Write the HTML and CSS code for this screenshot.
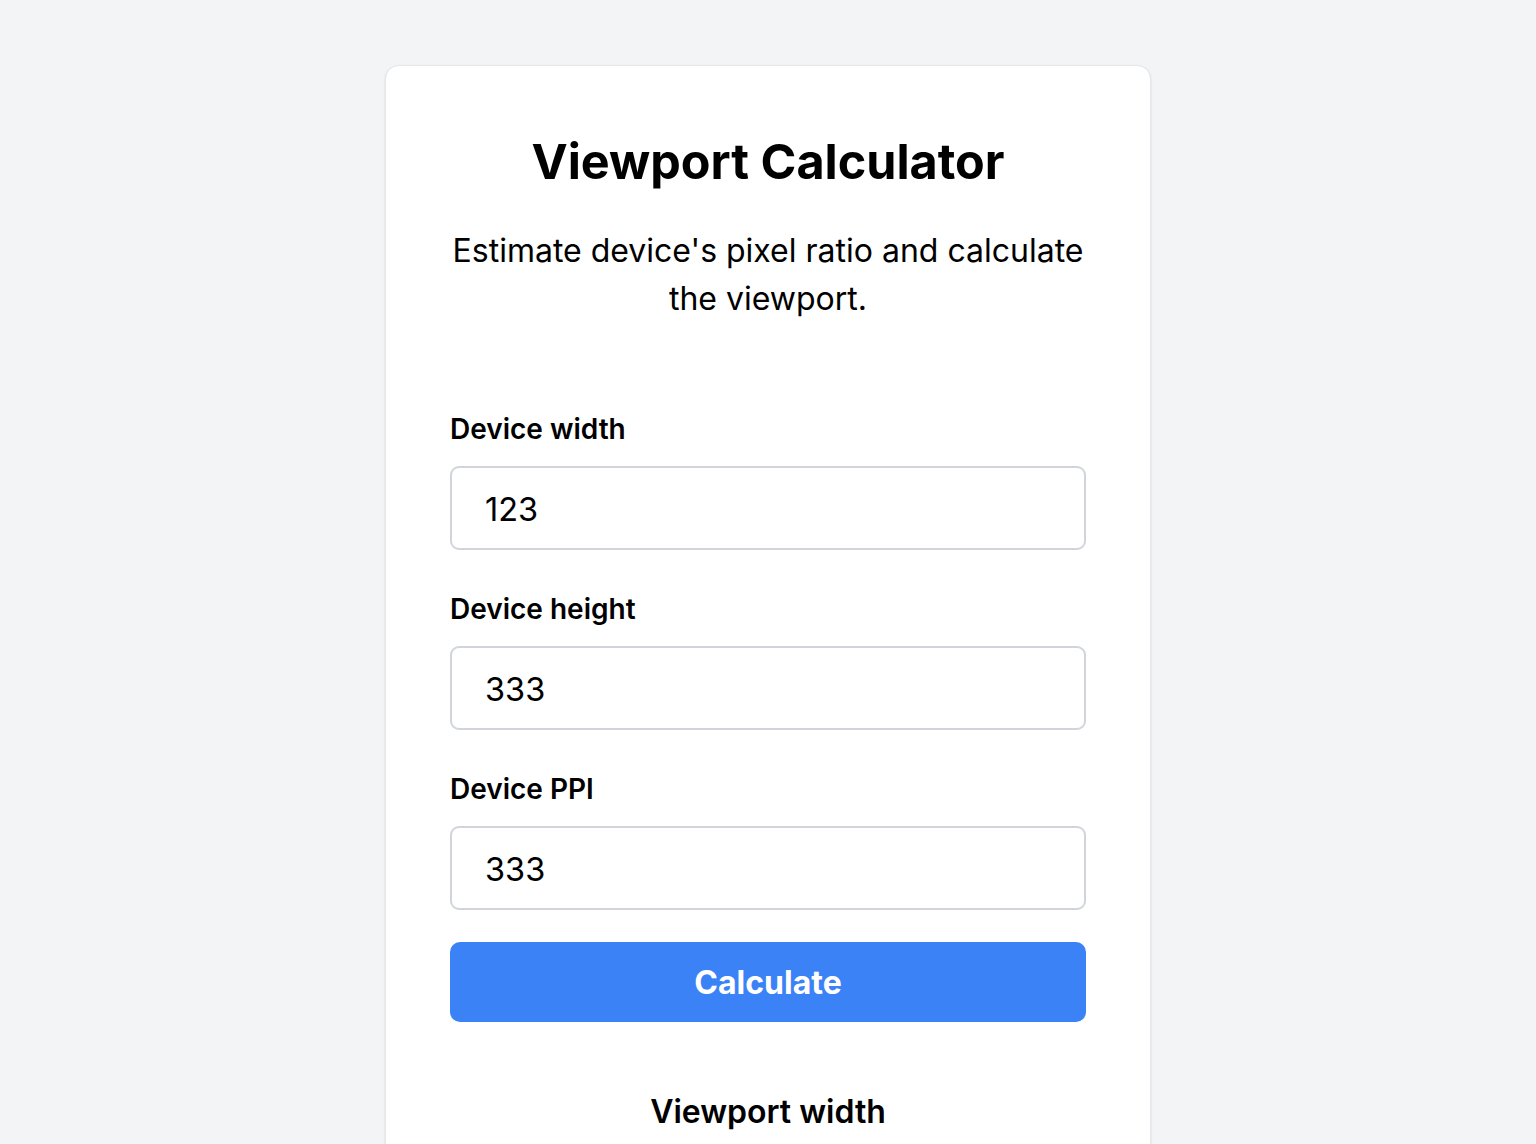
FILE: index.html
```html
<!DOCTYPE html>
<html lang="en">
<head>
    <meta charset="UTF-8">
    <meta name="viewport" content="width=device-width, initial-scale=1.0">
    <title>Viewport Calculator</title>
    <link rel="stylesheet" href="styles.css">
</head>
<body>
    <div class="calculator">
        <h1 class="calc-title">Viewport Calculator</h1>
        <p class="calc-subtitle">Estimate device's pixel ratio and calculate the viewport.</p>

        <form class="calc-form">
            <div class="field">
                <label class="field-label" for="width">Device width</label>
                <input class="field-input" id="width" type="text" value="123">
            </div>
            <div class="field">
                <label class="field-label" for="height">Device height</label>
                <input class="field-input" id="height" type="text" value="333">
            </div>
            <div class="field">
                <label class="field-label" for="ppi">Device PPI</label>
                <input class="field-input" id="ppi" type="text" value="333">
            </div>
            <button class="calc-button" type="button">Calculate</button>
        </form>

        <div class="results">
            <h2 class="result-title">Viewport width</h2>
        </div>
    </div>
</body>
</html>
```

FILE: styles.css
```css
* {
    margin: 0;
    padding: 0;
    box-sizing: border-box;
}

body {
    font-family: Inter, 'Noto Sans', sans-serif;
    background: #f3f4f6;
    color: #000;
    display: flex;
    justify-content: center;
    padding-top: 65px;
    min-height: 100vh;
}

.calculator {
    background: #fff;
    width: 766px;
    padding: 67px 64px 40px;
    border-radius: 14px;
    border: 1px solid #e5e7eb;
    box-shadow: 0 1px 3px rgba(0, 0, 0, 0.08), 0 1px 2px rgba(0, 0, 0, 0.04);
}

.calc-title {
    font-size: 48.5px;
    font-weight: 700;
    text-align: center;
    line-height: 1.2;
}

.calc-subtitle {
    font-size: 32px;
    line-height: 48px;
    text-align: center;
    margin-top: 36px;
}

.calc-form {
    margin-top: 88px;
    display: flex;
    flex-direction: column;
}

.field {
    display: flex;
    flex-direction: column;
    margin-bottom: 41px;
}

.field:last-of-type {
    margin-bottom: 32px;
}

.field-label {
    font-size: 28px;
    font-weight: 600;
    line-height: 36px;
    margin-bottom: 19px;
}

.field-input {
    font-family: inherit;
    font-size: 32.5px;
    height: 84px;
    padding: 2px 33px 0;
    border: 2px solid #d1d5db;
    border-radius: 9px;
    color: #000;
    outline: none;
}

.calc-button {
    font-family: inherit;
    font-size: 32px;
    font-weight: 700;
    color: #fff;
    background: #3b82f6;
    border: none;
    border-radius: 10px;
    height: 80px;
    cursor: pointer;
}

.results {
    margin-top: 70px;
    text-align: center;
}

.result-title {
    font-size: 32px;
    font-weight: 600;
    line-height: 40px;
}
```
